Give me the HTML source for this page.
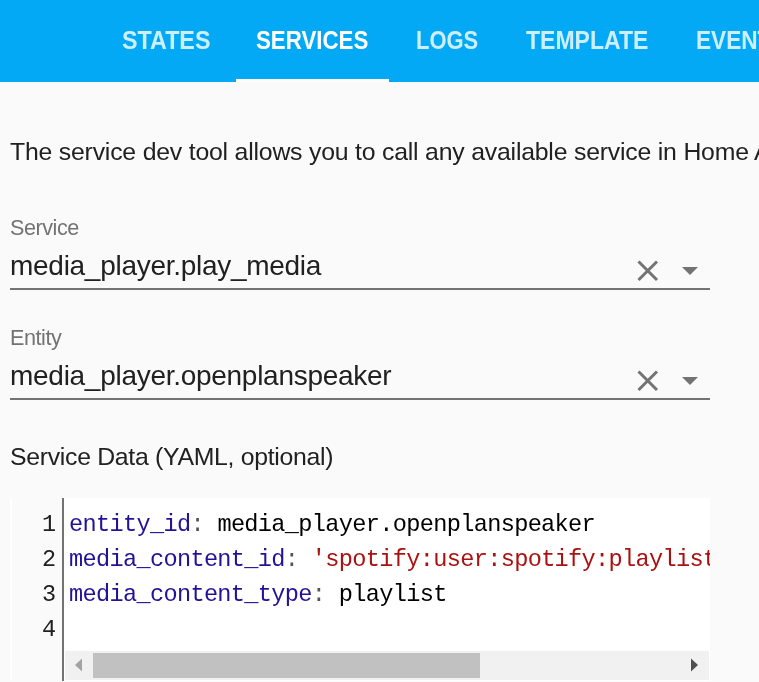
<!DOCTYPE html>
<html><head><meta charset="utf-8">
<style>
*{margin:0;padding:0;box-sizing:border-box}
html,body{width:759px;height:682px;overflow:hidden;background:#fafafa;font-family:"Liberation Sans",sans-serif}
#root{position:absolute;left:0;top:0;width:759px;height:682px;background:#fafafa;will-change:transform;overflow:hidden}
.hdr{position:absolute;left:0;top:0;width:759px;height:82px;background:#03a9f4}
.tab{position:absolute;top:23px;height:34px;line-height:34px;font-size:26px;font-weight:bold;color:rgba(255,255,255,0.8);white-space:nowrap;transform-origin:0 0}
.tab.sel{color:#fff}
.ul{position:absolute;left:236px;top:79px;width:153px;height:3px;background:#fff}
.t{position:absolute;white-space:nowrap;line-height:1}
.desc{font-size:24.8px;color:#212121;letter-spacing:-0.2px}
.lbl{font-size:21.6px;color:#737373;letter-spacing:-0.45px}
.val{font-size:28px;color:#212121;letter-spacing:-0.28px}
.line{position:absolute;left:10px;width:700px;height:2px;background:#737373}
.ed{position:absolute;left:10px;top:498px;width:700px;height:183px;background:#fff;overflow:hidden}
.gut{position:absolute;left:2px;top:0;width:52px;height:183px;background:#fafafa;border-right:2px solid #737373}
.ln{position:absolute;left:0;width:44px;text-align:right;font-family:"Liberation Mono",monospace;font-size:23.5px;line-height:35px;color:#212121}
.code{position:absolute;left:59px;font-family:"Liberation Mono",monospace;font-size:23.6px;letter-spacing:-0.67px;line-height:35px;white-space:pre;color:#000}
.k{color:#221199}.s{color:#aa1111}.p{color:#555}
.sb{position:absolute;left:55px;top:153px;width:644px;height:29px;background:#f1f1f1}
.thumb{position:absolute;left:28px;top:2px;width:387px;height:25px;background:#c1c1c1}
</style></head><body><div id="root">
<div class="hdr">
  <div class="tab" style="left:121.6px;transform:scaleX(0.896)">STATES</div>
  <div class="tab sel" style="left:256.3px;transform:scaleX(0.857)">SERVICES</div>
  <div class="tab" style="left:415.9px;transform:scaleX(0.845)">LOGS</div>
  <div class="tab" style="left:526.3px;transform:scaleX(0.885)">TEMPLATE</div>
  <div class="tab" style="left:696.4px;transform:scaleX(0.87)">EVENTS</div>
  <div class="ul"></div>
</div>
<div class="t desc" style="left:10px;top:140px">The service dev tool allows you to call any available service in Home Assistant.</div>

<div class="t lbl" style="left:10px;top:217px">Service</div>
<div class="t val" style="left:10px;top:252px">media_player.play_media</div>
<svg style="position:absolute;left:635px;top:258px" width="25" height="25" viewBox="0 0 25 25"><path d="M3.5 3.5L22 22M22 3.5L3.5 22" stroke="#737373" stroke-width="3"/></svg>
<svg style="position:absolute;left:680.5px;top:266px" width="18" height="10" viewBox="0 0 18 10"><path d="M1 1H17L9 9Z" fill="#737373"/></svg>
<div class="line" style="top:288px"></div>

<div class="t lbl" style="left:10px;top:327px">Entity</div>
<div class="t val" style="left:10px;top:362px">media_player.openplanspeaker</div>
<svg style="position:absolute;left:635px;top:368px" width="25" height="25" viewBox="0 0 25 25"><path d="M3.5 3.5L22 22M22 3.5L3.5 22" stroke="#737373" stroke-width="3"/></svg>
<svg style="position:absolute;left:680.5px;top:376px" width="18" height="10" viewBox="0 0 18 10"><path d="M1 1H17L9 9Z" fill="#737373"/></svg>
<div class="line" style="top:398px"></div>

<div class="t desc" style="left:10px;top:445px;letter-spacing:-0.29px">Service Data (YAML, optional)</div>

<div class="ed">
  <div class="gut">
    <div class="ln" style="top:9px">1</div>
    <div class="ln" style="top:44px">2</div>
    <div class="ln" style="top:79px">3</div>
    <div class="ln" style="top:114px">4</div>
  </div>
  <div class="code" style="top:9px"><span class="k">entity_id</span><span class="p">:</span> media_player.openplanspeaker</div>
  <div class="code" style="top:44px"><span class="k">media_content_id</span><span class="p">:</span> <span class="s">'spotify:user:spotify:playlist:37i9dQZF1DXcBWIGoYBM5M'</span></div>
  <div class="code" style="top:79px"><span class="k">media_content_type</span><span class="p">:</span> playlist</div>
  <div class="sb"><div class="thumb"></div>
    <svg style="position:absolute;left:10px;top:7.3px" width="8" height="14" viewBox="0 0 8 14"><path d="M7 0.5V13.5L0 7Z" fill="#a3a3a3"/></svg>
    <svg style="position:absolute;left:625px;top:7.3px" width="8" height="14" viewBox="0 0 8 14"><path d="M1 0.5V13.5L8 7Z" fill="#505050"/></svg>
  </div>
</div>
</div></body></html>
